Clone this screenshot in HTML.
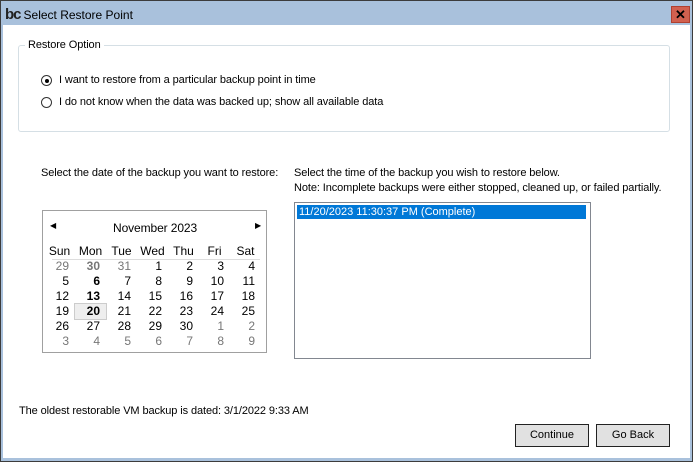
<!DOCTYPE html>
<html><head><style>
body{margin:0;width:693px;height:462px;overflow:hidden;font-family:"Liberation Sans",Arial,sans-serif;font-size:11px;color:#000;}
.win{position:absolute;left:0;top:0;width:691px;height:460px;border:1px solid #3c3c3c;background:#a9c1dc;}
.title{position:absolute;left:4px;top:0;height:26px;line-height:28px;font-size:12px;}
.title b{font-size:15px;letter-spacing:-1px;color:#222;margin-right:3px}
.close{position:absolute;left:670px;top:5px;width:19px;height:17px;background:#d1604f;border:1px solid #b04030;box-sizing:border-box;text-align:center;font-weight:bold;font-size:13px;line-height:15px;}
.client{position:absolute;left:2px;top:24px;width:687px;height:433px;background:#fff;}
.abs{position:absolute;white-space:nowrap;letter-spacing:-0.1px}
.grp{position:absolute;left:15px;top:20px;width:650px;height:85px;border:1px solid #d5dfe5;border-radius:3px;}
.radio{position:absolute;width:11px;height:11px;border:1px solid #333;border-radius:50%;box-sizing:border-box;}
.radio.on::after{content:"";position:absolute;left:2.5px;top:2.5px;width:4px;height:4px;background:#000;border-radius:50%;}
.cal{position:absolute;left:39px;top:185px;width:223px;height:141px;border:1px solid #a0a0a0;}
.cal table{position:absolute;left:1px;top:33px;border-collapse:collapse;font-size:12px;}
.cal td{width:31px;height:15px;text-align:right;padding:0 6px 0 0;box-sizing:border-box;line-height:15px;}
.cal tr:first-child td{text-align:center;padding:0}
.g{color:#777}
.list{position:absolute;left:291px;top:177px;width:295px;height:155px;border:1px solid #828790;}
.sel{position:absolute;left:2px;top:2px;width:289px;height:14px;background:#0078d7;color:#fff;line-height:14px;padding-left:2px;box-sizing:border-box;}
.btn{position:absolute;top:399px;width:74px;height:23px;background:#e1e1e1;border:1px solid #222;box-sizing:border-box;text-align:center;line-height:21px;font-size:11px;}
</style></head><body>
<div class="win">
<div class="title"><b>bc</b>Select Restore Point</div>
<div class="close">✕</div>
<div class="client">
<div class="grp"></div>
<div class="abs" style="left:22px;top:14px;background:#fff;padding:0 3px">Restore Option</div>
<div class="radio on" style="left:38px;top:50px"></div>
<div class="abs" style="left:56px;top:49px">I want to restore from a particular backup point in time</div>
<div class="radio" style="left:38px;top:72px"></div>
<div class="abs" style="left:56px;top:71px">I do not know when the data was backed up; show all available data</div>
<div class="abs" style="left:38px;top:142px">Select the date of the backup you want to restore:</div>
<div class="abs" style="left:291px;top:142px">Select the time of the backup you wish to restore below.</div>
<div class="abs" style="left:291px;top:157px">Note: Incomplete backups were either stopped, cleaned up, or failed partially.</div>
<div class="cal">
<div class="abs" style="left:7px;top:10px;font-size:8px">◀</div>
<div class="abs" style="left:70px;top:10px;font-size:12px">November 2023</div>
<div class="abs" style="left:212px;top:10px;font-size:8px">▶</div>
<div style="position:absolute;left:9px;top:48px;width:208px;border-top:1px solid #ddd"></div>
<table>
<tr><td>Sun</td><td>Mon</td><td>Tue</td><td>Wed</td><td>Thu</td><td>Fri</td><td>Sat</td></tr>
<tr><td class="g">29</td><td class="g"><b>30</b></td><td class="g">31</td><td>1</td><td>2</td><td>3</td><td>4</td></tr>
<tr><td>5</td><td><b>6</b></td><td>7</td><td>8</td><td>9</td><td>10</td><td>11</td></tr>
<tr><td>12</td><td><b>13</b></td><td>14</td><td>15</td><td>16</td><td>17</td><td>18</td></tr>
<tr><td>19</td><td style="background:#eee;outline:1px solid #ccc"><b>20</b></td><td>21</td><td>22</td><td>23</td><td>24</td><td>25</td></tr>
<tr><td>26</td><td>27</td><td>28</td><td>29</td><td>30</td><td class="g">1</td><td class="g">2</td></tr>
<tr><td class="g">3</td><td class="g">4</td><td class="g">5</td><td class="g">6</td><td class="g">7</td><td class="g">8</td><td class="g">9</td></tr>
</table>
</div>
<div class="list"><div class="sel">11/20/2023 11:30:37 PM (Complete)</div></div>
<div class="abs" style="left:16px;top:380px">The oldest restorable VM backup is dated: 3/1/2022 9:33 AM</div>
<div class="btn" style="left:512px">Continue</div>
<div class="btn" style="left:593px">Go Back</div>
</div>
</div>
</body></html>
